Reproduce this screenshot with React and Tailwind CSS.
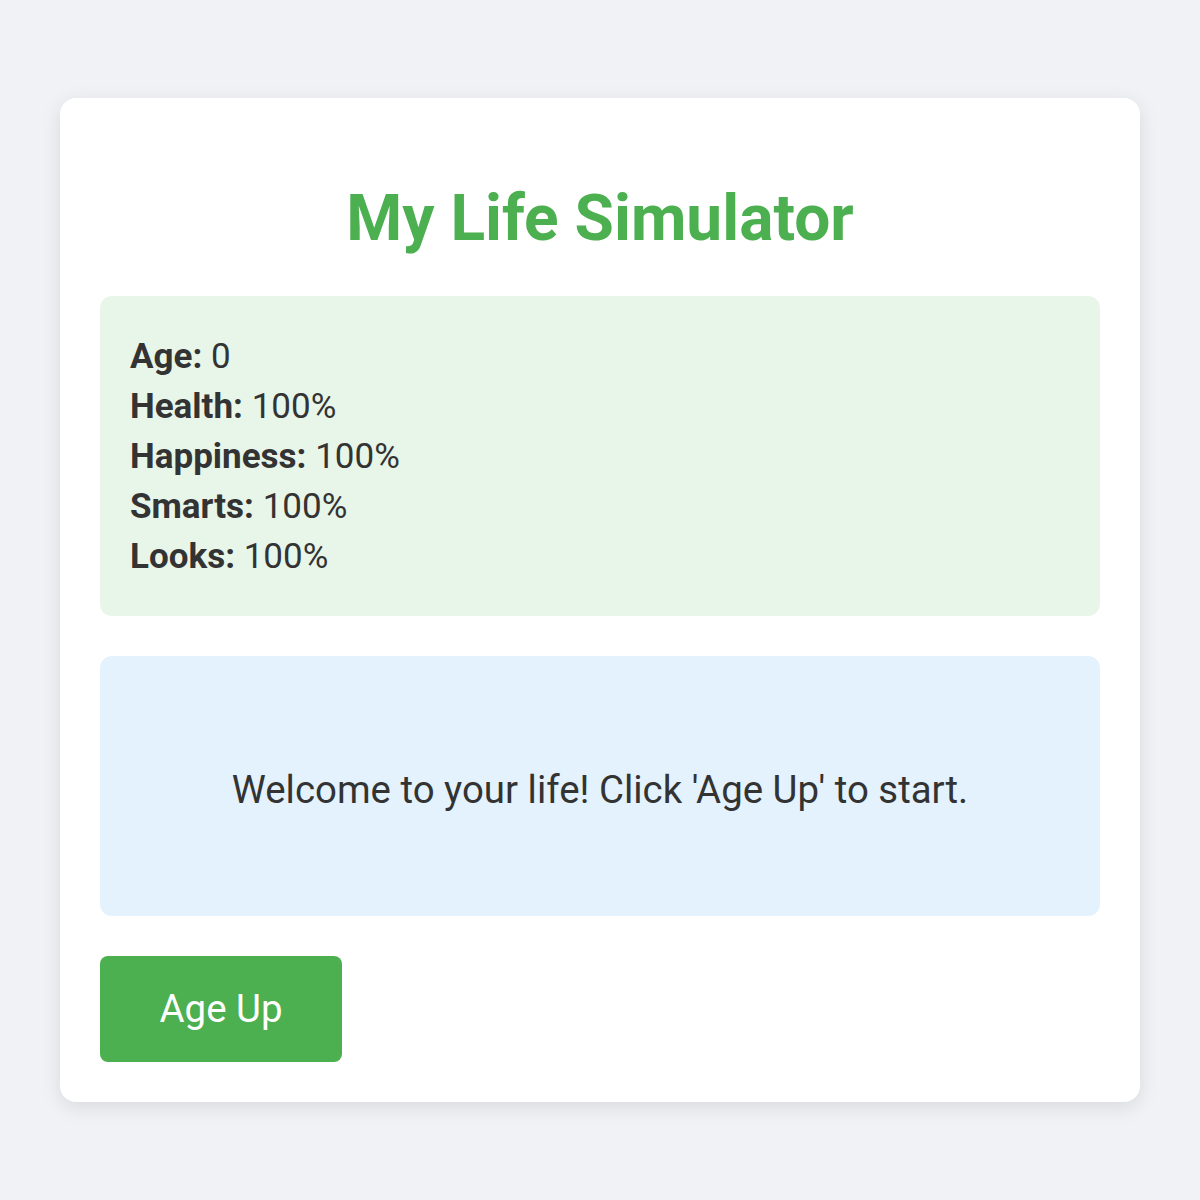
export default function App() {
    const stats = [
        { label: 'Age', value: '0' },
        { label: 'Health', value: '100%' },
        { label: 'Happiness', value: '100%' },
        { label: 'Smarts', value: '100%' },
        { label: 'Looks', value: '100%' }
    ];

    return (
        <div className="min-h-screen bg-[#f0f2f5] pt-[98px] px-[60px] font-['Roboto',sans-serif] text-[#333]">
            <div className="bg-white rounded-2xl shadow-[0_5px_20px_rgba(0,0,0,0.1)] p-10">
                <h1 className="mt-[43px] mb-10 text-center text-[64px] font-bold leading-[1.172] text-[#4caf50]">
                    My Life Simulator
                </h1>
                <div className="bg-[#e8f5e9] rounded-xl px-[30px] pt-[36px] pb-[34px] text-[35px] leading-[50px]">
                    {stats.map((s) => (
                        <div key={s.label}>
                            <span className="font-bold">{s.label}:</span> {s.value}
                        </div>
                    ))}
                </div>
                <div className="mt-10 h-[260px] pt-2 bg-[#e3f2fd] rounded-xl flex items-center justify-center text-[38.4px]">
                    Welcome to your life! Click 'Age Up' to start.
                </div>
                <button className="mt-10 w-[242px] h-[106px] bg-[#4caf50] text-white rounded-lg text-[38.4px]">
                    Age Up
                </button>
            </div>
        </div>
    );
}
